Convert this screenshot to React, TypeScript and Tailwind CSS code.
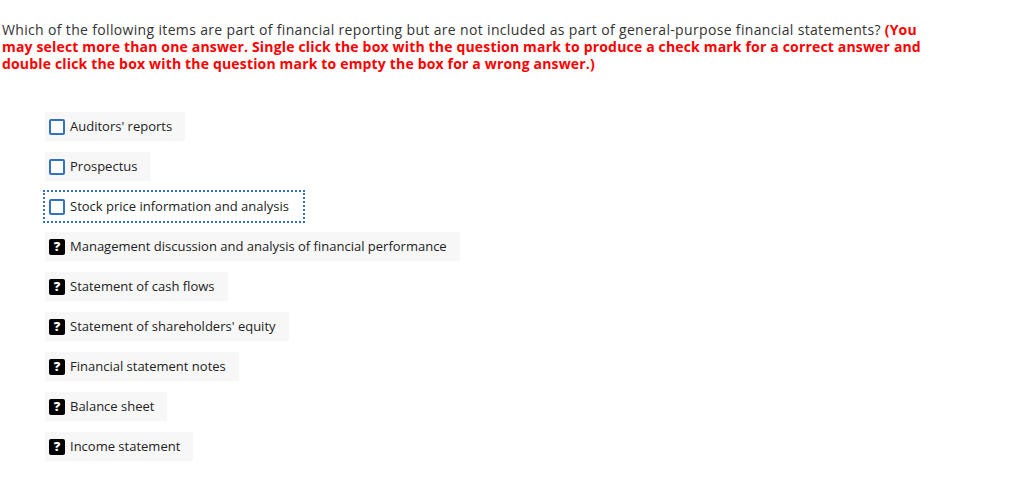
import React from "react";

const checked = ["Auditors' reports", "Prospectus", "Stock price information and analysis"];
const unknown = [
  "Management discussion and analysis of financial performance",
  "Statement of cash flows",
  "Statement of shareholders' equity",
  "Financial statement notes",
  "Balance sheet",
  "Income statement",
];

function Box() {
  return <span className="inline-block w-[16px] h-[16px] border-2 border-[#3172c4] rounded-[2px] bg-white shrink-0" />;
}

function Q() {
  return (
    <span className="inline-flex items-center justify-center w-[16px] h-[16px] rounded-[2px] bg-black text-white text-[13px] font-extrabold leading-none shrink-0">
      ?
    </span>
  );
}

export default function App() {
  return (
    <div className="bg-white w-[1024px] h-[486px] text-[#333]" style={{ fontFamily: "'Open Sans', sans-serif" }}>
      <p className="pt-[21px] pl-[2px] w-[928px] text-[14px] leading-[17px] tracking-[0.34px]">
        Which of the following items are part of financial reporting but are not included as part of general-purpose financial statements?{" "}
        <span className="text-[#ff0000] font-bold tracking-[0.17px]">
          (You may select more than one answer. Single click the box with the question mark to produce a check mark for a correct answer and double click the box with the question mark to empty the box for a wrong answer.)
        </span>
      </p>
      <div className="flex flex-col items-start gap-[11px] pl-[45px] pt-[40px] text-[13px] text-[#222]">
        {checked.map((t, i) => (
          <div
            key={t}
            className={
              i === 2
                ? "flex items-center gap-[5px] h-[29px] pl-[4px] pr-[14px] outline-2 outline-dotted outline-[#3172c4]"
                : "flex items-center gap-[5px] h-[29px] pl-[4px] pr-[13px] bg-[#f7f7f7]"
            }
          >
            <Box />
            <span>{t}</span>
          </div>
        ))}
        {unknown.map((t) => (
          <div key={t} className="flex items-center gap-[5px] h-[29px] pl-[4px] pr-[13px] bg-[#f7f7f7]">
            <Q />
            <span>{t}</span>
          </div>
        ))}
      </div>
    </div>
  );
}
